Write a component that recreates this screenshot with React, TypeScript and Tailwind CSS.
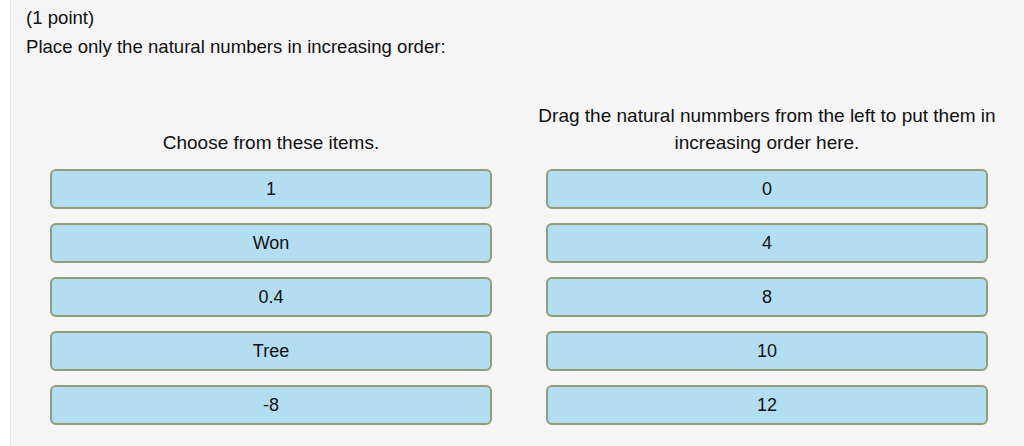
import type { ReactNode } from 'react'

const left = ['1', 'Won', '0.4', 'Tree', '-8']
const right = ['0', '4', '8', '10', '12']

function Item({ label }: { label: string }) {
  return (
    <div className="h-[40px] flex items-center justify-center rounded-[6px] border-2 border-[#8f9e78] bg-[#b3ddf1] text-[18px] text-[#111]">
      {label}
    </div>
  )
}

function Column({ heading, items }: { heading: ReactNode; items: string[] }) {
  return (
    <div className="flex flex-col">
      <div className="flex-1 flex items-end justify-center text-center text-[19px] leading-[27px] text-[#111] pb-[13px] -mx-[20px] whitespace-nowrap">
        <div>{heading}</div>
      </div>
      <div className="flex flex-col gap-[14px]">
        {items.map((it) => (
          <Item key={it} label={it} />
        ))}
      </div>
    </div>
  )
}

export default function App() {
  return (
    <div className="h-[446px] w-[1024px] bg-white pl-[10px] font-['Liberation_Sans',Arial,sans-serif]">
      <div className="h-full bg-[#f5f5f5] border-l border-[#e6e6e6] pl-[15px] pt-[3px]">
        <div className="text-[18.6px] leading-[29px] text-[#111]">(1 point)</div>
        <div className="text-[18.6px] leading-[29px] text-[#111]">Place only the natural numbers in increasing order:</div>
        <div className="grid grid-cols-[442px_442px] gap-x-[54px] ml-[24px] mt-[41px]">
          <Column heading="Choose from these items." items={left} />
          <Column
            heading={
              <>
                Drag the natural nummbers from the left to put them in
                <br />
                increasing order here.
              </>
            }
            items={right}
          />
        </div>
      </div>
    </div>
  )
}
